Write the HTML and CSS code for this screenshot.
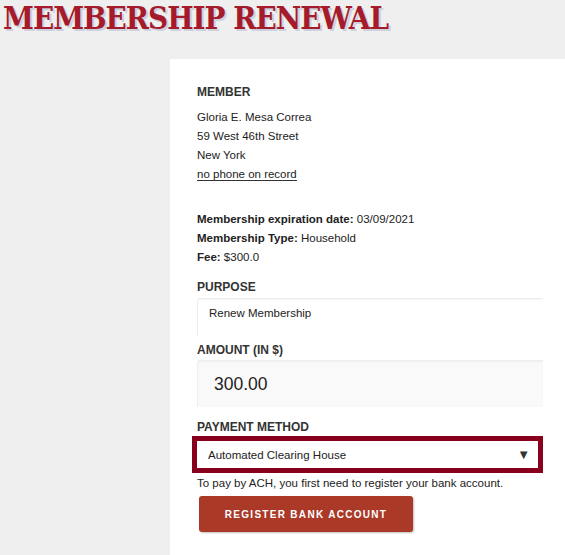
FILE: index.html
```html
<!DOCTYPE html>
<html lang="en">
<head>
<meta charset="utf-8">
<title>Membership Renewal</title>
<link rel="stylesheet" href="styles.css">
</head>
<body>
<h1 class="page-title">MEMBERSHIP RENEWAL</h1>
<main class="panel">
  <section class="member">
    <h2 class="label">MEMBER</h2>
    <div class="lines">
      <div>Gloria E. Mesa Correa</div>
      <div>59 West 46th Street</div>
      <div>New York</div>
      <div><span class="phone">no phone on record</span></div>
    </div>
  </section>
  <section class="details">
    <div><b>Membership expiration date:</b> 03/09/2021</div>
    <div><b>Membership Type:</b> Household</div>
    <div><b>Fee:</b> $300.0</div>
  </section>
  <div class="field field-purpose">
    <div class="label">PURPOSE</div>
    <div class="input purpose">Renew Membership</div>
  </div>
  <div class="field field-amount">
    <div class="label">AMOUNT (IN $)</div>
    <div class="input amount">300.00</div>
  </div>
  <div class="field field-method">
    <div class="label">PAYMENT METHOD</div>
    <div class="select"><span>Automated Clearing House</span><span class="arrow">&#9660;</span></div>
  </div>
  <p class="help">To pay by ACH, you first need to register your bank account.</p>
  <button class="btn" type="button">REGISTER BANK ACCOUNT</button>
</main>
</body>
</html>
```
FILE: styles.css
```css
html, body {
  margin: 0;
  padding: 0;
}
body {
  background: #efefef;
  font-family: "Liberation Sans", Arial, sans-serif;
  font-size: 11.5px;
  color: #222;
  height: 555px;
  overflow: hidden;
}
.page-title {
  margin: 0;
  padding: 1px 0 0 3px;
  height: 59px;
  box-sizing: border-box;
  font-family: "DejaVu Serif", serif;
  font-stretch: condensed;
  font-weight: bold;
  font-size: 31px;
  letter-spacing: -1px;
  line-height: 34px;
  color: #a51b2b;
  text-shadow: 2px 2px 0 #cdd2de;
}
.panel {
  margin-left: 170px;
  background: #fff;
  padding: 24px 22px 30px 27px;
}
.label {
  margin: 0;
  font-size: 12px;
  font-weight: bold;
  color: #333;
  line-height: 19px;
}
.lines {
  margin-top: 6px;
  line-height: 19px;
}
.phone {
  border-bottom: 1px solid #333;
}
.details {
  margin-top: 26px;
  line-height: 19px;
}
.field-purpose {
  margin-top: 11px;
}
.field-amount {
  margin-top: 5px;
}
.field-method {
  margin-top: 11px;
}
.field .label {
  margin-bottom: 1px;
}
.field-amount .label {
  margin-bottom: 0;
}
.field-method .label {
  margin-bottom: -1px;
}
.input {
  box-sizing: border-box;
  border: 1px solid #eee;
  border-right: 0;
  border-bottom: 0;
  border-radius: 3px 0 0 0;
  box-shadow: inset 0 1px 1px rgba(0,0,0,0.04);
}
.purpose {
  height: 38px;
  padding: 2px 11px;
  line-height: 24px;
}
.amount {
  height: 47px;
  background: #f9f9f9;
  padding: 0 16px;
  font-size: 17.5px;
  line-height: 46px;
}
.select {
  display: flex;
  justify-content: space-between;
  align-items: center;
  box-sizing: border-box;
  height: 37px;
  margin-left: -5px;
  border: 5px solid #88001b;
  padding: 0 8px 0 11px;
  background: #fff;
}
.arrow {
  font-size: 13px;
  color: #333;
}
.help {
  margin: 1px 0 0;
  line-height: 19px;
}
.btn {
  display: block;
  margin: 3px 0 0 2px;
  width: 214px;
  height: 36px;
  background: #aa3927;
  color: #fff;
  border: 0;
  border-radius: 3px;
  box-shadow: 1px 1px 2px rgba(0,0,0,0.25);
  font-family: "Liberation Sans", Arial, sans-serif;
  font-weight: bold;
  font-size: 10px;
  letter-spacing: 1.3px;
  padding: 0;
}
```
